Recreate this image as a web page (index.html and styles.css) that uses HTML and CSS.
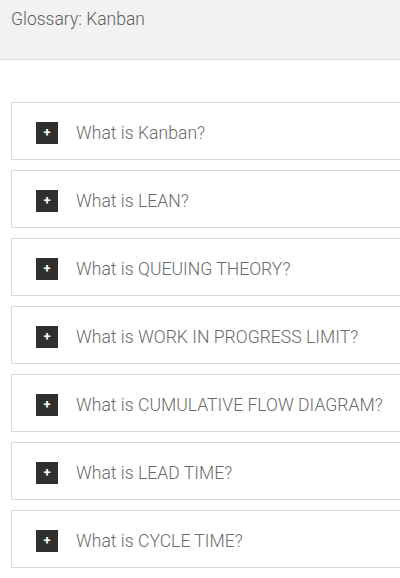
FILE: index.html
```html
<!DOCTYPE html>
<html lang="en">
<head>
    <meta charset="UTF-8">
    <title>Glossary: Kanban</title>
    <link rel="stylesheet" href="styles.css">
</head>
<body>
    <div class="header">
        <h1>Glossary: Kanban</h1>
    </div>

    <!-- glossary list -->
    <div class="faq-list">
        <div class="faq-item">
            <span class="toggle">+</span>
            <span class="question">What is Kanban?</span>
        </div>
        <div class="faq-item">
            <span class="toggle">+</span>
            <span class="question">What is LEAN?</span>
        </div>
        <div class="faq-item">
            <span class="toggle">+</span>
            <span class="question">What is QUEUING THEORY?</span>
        </div>
        <div class="faq-item">
            <span class="toggle">+</span>
            <span class="question">What is WORK IN PROGRESS LIMIT?</span>
        </div>
        <div class="faq-item">
            <span class="toggle">+</span>
            <span class="question">What is CUMULATIVE FLOW DIAGRAM?</span>
        </div>
        <div class="faq-item">
            <span class="toggle">+</span>
            <span class="question">What is LEAD TIME?</span>
        </div>
        <div class="faq-item">
            <span class="toggle">+</span>
            <span class="question">What is CYCLE TIME?</span>
        </div>
    </div>
</body>
</html>
```

FILE: styles.css
```css
body {
    margin: 0;
    background: #fff;
    font-family: Roboto, 'Liberation Sans', sans-serif;
}

.header {
    height: 60px;
    box-sizing: border-box;
    background: #f2f2f2;
    border-bottom: 1px solid #dcdcdc;
    padding: 9px 11px 0;
}

.header h1 {
    margin: 0;
    font-size: 17.5px;
    line-height: 20px;
    font-weight: 300;
    color: #5f5f5f;
}

.faq-list {
    display: flex;
    flex-direction: column;
    gap: 10px;
    padding: 42px 0 0 11px;
}

/* the cards run off the right edge, so no right border */
.faq-item {
    height: 58px;
    box-sizing: border-box;
    border: 1px solid #d9d9d9;
    border-right: none;
    display: flex;
    align-items: center;
    padding: 3px 0 0 24px;
}

.toggle {
    width: 22px;
    height: 22px;
    background: #2f2f2f;
    color: #fff;
    font-size: 13px;
    font-weight: 700;
    line-height: 22px;
    text-align: center;
    flex-shrink: 0;
}

.question {
    margin-left: 18px;
    font-size: 17.6px;
    font-weight: 300;
    color: #6a6a6a;
}
```
